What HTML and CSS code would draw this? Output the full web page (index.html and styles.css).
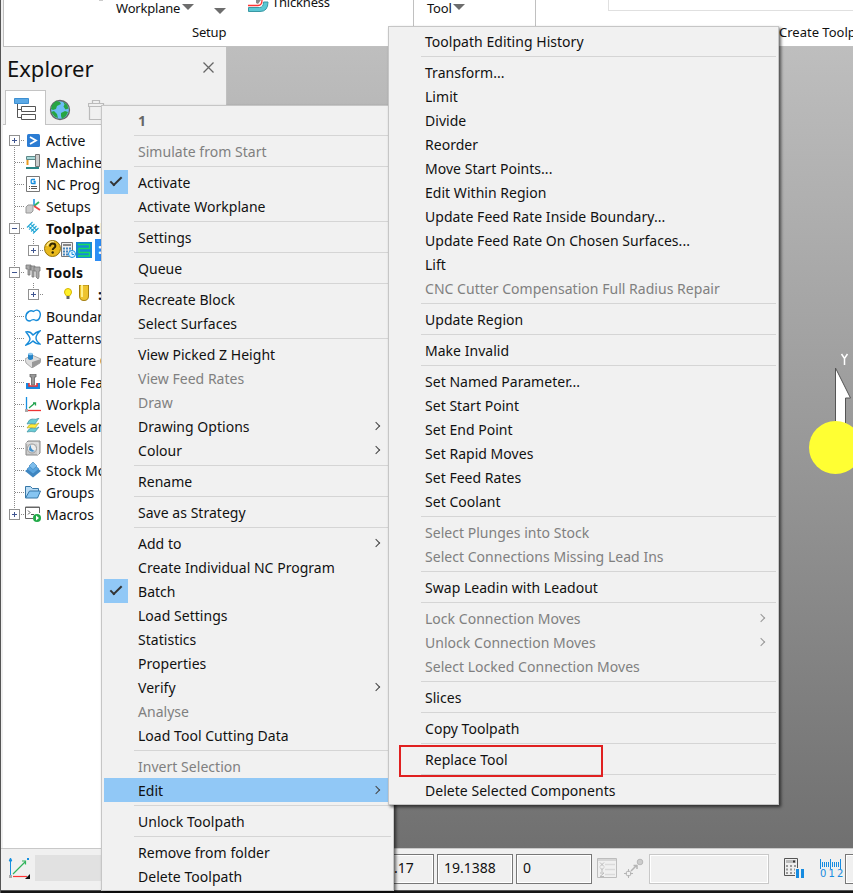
FILE: index.html
```html
<!DOCTYPE html>
<html lang="en">

<head>
    <meta charset="UTF-8">
    <meta name="viewport" content="width=device-width, initial-scale=1.0">
    <title>Explorer</title>
    <link rel="stylesheet" href="styles.css">
</head>

<body>
    <div class="app">
        <div class="ribbon">
            <div class="ribbon-group group-setup">
                <div class="ribbon-row">
                    <span class="smudge"></span>
                    <span class="workplane">Workplane</span><i class="caret"></i><i class="caret caret-low"></i>
                    <svg class="thickness-icon" width="21" height="13" viewBox="0 0 21 13"><path d="M.5 7.500h11q4 0 4-5.500h4.500q0 9.500-8 9.500H.5z" fill="#5bc8d4" stroke="#3a98a4"/><path d="M0 5.500h10q4 0 4-5.500" fill="none" stroke="#f33" stroke-width="1.300"/><path d="M8 0h5l-3 4-2-1z" fill="#888"/></svg>
                    <span class="thickness">Thickness</span>
                </div>
                <div class="ribbon-title">Setup</div>
            </div>
            <div class="ribbon-group group-tool">
                <div class="ribbon-row"><span class="tool">Tool</span><i class="caret"></i></div>
            </div>
            <div class="ribbon-group group-create">
                <div class="ribbon-input"></div>
                <div class="ribbon-title">Create Toolpaths</div>
            </div>
        </div>

        <div class="main">
            <div class="explorer">
                <div class="explorer-head">
                    <h1>Explorer</h1>
                    <svg width="11" height="11" viewBox="0 0 11 11"><path d="M.5.500l10 10M10.500.500l-10 10" stroke="#666" stroke-width="1.300"/></svg>
                </div>
                <div class="tabs">
                    <div class="tab active">
                        <svg width="22" height="23" viewBox="0 0 22 23"><path d="M3.500 6v13.500H7M3.500 11.500H7" fill="none" stroke="#555"/><path d="M.5.500h14v5H.5z" fill="#5ba9e6" stroke="#3d8fd1"/><path d="M7.500 8.500h14v5h-14zM7.500 16.500h14v5h-14z" fill="#fff" stroke="#555"/></svg>
                    </div>
                    <svg class="globe" width="22" height="22" viewBox="0 0 22 22"><circle cx="11" cy="11" r="9.500" fill="#6cbcf5" stroke="#666" stroke-width="1.300"/><path d="M3 6l4-4 4 1 1 2-4 2-1 3-3 1-2-1zM14 2.500l4 3 1.500 4-3 1-2-3 1-2zM2 13l3-1 3 3 1 4-3-1zM12 14l4-2 3 1-2 4-4 3-1-3z" fill="#27a543"/></svg>
                    <svg class="trash" width="18" height="21" viewBox="0 0 18 21"><path d="M.5 3.500h15v3H.5zM1.500 6.500v13h13v-13M4.500 3.500v-3h7v3" fill="none" stroke="#bbb" stroke-width="1.200"/></svg>
                </div>
                <ul class="tree">
                    <li><i class="expander plus"></i><i class="dots short"></i>
                        <svg class="icon" viewBox="0 0 16 16"><rect x="2" y="2" width="13" height="13" rx="1.500" fill="#2b7cd3"/><path d="M5 5l6 3.500L5 12" fill="none" stroke="#fff" stroke-width="1.800"/></svg>Active</li>
                    <li><i class="dots"></i>
                        <svg class="icon" viewBox="0 0 16 16"><path d="M1.500 2.500h9v3h-9z" fill="#a9dada" stroke="#5e8888"/><path d="M10.500.500h4v12h-4z" fill="#ccc" stroke="#777"/><path d="M2.500 6v5" stroke="#e89b20" stroke-width="2"/><path d="M1 14h13" stroke="#2b8585" stroke-width="2"/></svg>Machine Tools</li>
                    <li><i class="dots"></i>
                        <svg class="icon" viewBox="0 0 16 16"><path d="M1.500.500h13v15h-13z" fill="#fff" stroke="#777"/><path d="M10 3.500H7q-.8 0-.8 1v2q0 1 .8 1h3v-2H8.500" fill="none" stroke="#168fe0" stroke-width="1.300"/><path d="M4 10.500h1m1 0h6M4 12.500h1m1 0h6" stroke="#555"/></svg>NC Programs</li>
                    <li><i class="dots"></i>
                        <svg class="icon" viewBox="0 0 16 16"><path d="M9 8V1" stroke="#168fe0" stroke-width="1.500"/><path d="M9 8l5-4" stroke="#35b565" stroke-width="1.800"/><path d="M9 8l6 4" stroke="#e44" stroke-width="1.800"/><path d="M1 9l2-2h5v6l-2 2H1z" fill="#ccc" stroke="#999"/></svg>Setups</li>
                    <li class="bold"><i class="expander minus"></i><i class="dots short"></i>
                        <svg class="icon" viewBox="0 0 16 16"><path d="M2 7.500L7.500 2M4 9.500L9.500 4M6 11.500L11.500 6M8 13.500L13.500 8M3.500 6l6.500 6.500M5.500 4l6.500 6.500" stroke="#27a9d6" stroke-width="1.100"/></svg>Toolpaths</li>
                    <li class="child"><i class="expander plus"></i><i class="dots tiny"></i>
                        <svg class="question" width="17" height="17" viewBox="0 0 17 17"><circle cx="8.500" cy="8.500" r="8" fill="#e9b91c" stroke="#92720c"/><path d="M3 6q2-5 7-4" stroke="#ffe98b" fill="none" stroke-width="1.500"/><path d="M6 6.500q0-3 2.700-3t2.700 2.500c0 2-2.700 2-2.700 4" fill="none" stroke="#332800" stroke-width="1.900"/><circle cx="8.700" cy="12.500" r="1.200" fill="#332800"/></svg>
                        <svg width="15" height="16" viewBox="0 0 15 16"><path d="M.5.500h11v14H.5z" fill="#f0f0f0" stroke="#777"/><path d="M2 3h8" stroke="#888" stroke-width="2"/><path d="M2 6.500h8M2 9.500h8M2 12.500h8" stroke="#4685bd" stroke-width="2" stroke-dasharray="2 1"/><circle cx="11" cy="12" r="3.500" fill="#e7f6ff" stroke="#168fe0"/><path d="M11 10v2.500h2" fill="none" stroke="#168fe0"/></svg>
                        <svg width="16" height="16" viewBox="0 0 16 16"><path d="M0 0h16v16H0z" fill="#168bd5"/><path d="M2 2.500h11.500v4H3v4h10.500v3.500H2" fill="none" stroke="#19dc61" stroke-width="1.300"/></svg>
                        <b class="selected">:</b></li>
                    <li class="bold"><i class="expander minus"></i><i class="dots short"></i>
                        <svg class="icon" viewBox="0 0 16 16"><g fill="#aaa" stroke="#777" stroke-width=".8"><path d="M1 1h5v4H5v6H3V5H1zM5 2h5v4H9v7H7V6H5z"/><path d="M9 3h6v4h-1v6l-1 2-2-2V7H9z"/></g></svg>Tools</li>
                    <li class="child"><i class="expander plus"></i><i class="dots tiny"></i>
                        <svg class="bulb" width="10" height="14" viewBox="0 0 10 14"><path d="M1.500 5a3.500 3.500 0 017 0q0 2-2 4h-3q-2-2-2-4z" fill="#fff129" stroke="#d7b600"/><path d="M3.500 9h3v3h-3z" fill="#666"/></svg>
                        <svg class="endmill" width="10" height="16" viewBox="0 0 10 16"><path d="M.5 0v11q0 4.500 4.500 4.500T9.500 11V0z" fill="#eec42f" stroke="#a27e12"/><path d="M3 0v12" stroke="#fff08b" stroke-width="2"/></svg>
                        <b class="tool-name">:</b></li>
                    <li><i class="dots"></i>
                        <svg class="icon" viewBox="0 0 16 16"><path d="M4 3.500q2-1.500 4.500 0 3-2.500 5.500-.5 2 2 1 5.500-1 4-4 4-3-2-6 .5Q1 13 .8 9 1 5 4 3.500z" fill="none" stroke="#168bd9" stroke-width="1.400"/></svg>Boundaries</li>
                    <li><i class="dots"></i>
                        <svg class="icon" viewBox="0 0 16 16"><path d="M1 2q4-1 7 3 3-3 7-4-4 4-4 7t4 6q-4 0-7-3-3 3-7 4 4-4 4-6T1 2z" fill="none" stroke="#168bd9" stroke-width="1.400"/></svg>Patterns</li>
                    <li><i class="dots"></i>
                        <svg class="icon" viewBox="0 0 16 16"><path d="M0 7l7-4 9 4-1 4-8 5-6-5z" fill="#ddd" stroke="#999" stroke-width=".8"/><path d="M7 10l9-3-1 4-8 5z" fill="#999"/><path d="M3 2v5q2 2 5 0V2z" fill="#2684c7"/><ellipse cx="5.500" cy="2" rx="2.500" ry="1.300" fill="#8fc9ef"/></svg>Feature Groups</li>
                    <li><i class="dots"></i>
                        <svg class="icon" viewBox="0 0 16 16"><path d="M1 9h3v3h8V9h3v6H1z" fill="#1689e0"/><path d="M4 9v3h8V9" fill="none" stroke="#ed3030" stroke-width="1.500"/><path d="M5 0h6v3H9.500v8h-3V3H5z" fill="#999" stroke="#666" stroke-width=".8"/></svg>Hole Feature Sets</li>
                    <li><i class="dots"></i>
                        <svg class="icon" viewBox="0 0 16 16"><path d="M1.500 13V1" stroke="#168fe0" stroke-width="1.300"/><path d="M2 14.500h14" stroke="#ee3434" stroke-width="1.300"/><path d="M4 12l6-5M8 7h2.500v2.500" stroke="#24a450" stroke-width="1.300" fill="none"/><path d="M0 13h3v3H0z" fill="#aaa"/></svg>Workplanes</li>
                    <li><i class="dots"></i>
                        <svg class="icon" viewBox="0 0 16 16"><path d="M2 14q2-4 5-4 4 1 7-1l-4 5q-4-1-8 0z" fill="#69cbd5" stroke="#368a98" stroke-width=".6"/><path d="M2 10q2-4 5-4 4 1 7-1l-4 5q-4-1-8 0z" fill="#ffed39" stroke="#aa9d23" stroke-width=".6"/><path d="M2 6q2-5 5-5 4 1 7-1l-4 6q-4-1-8 0z" fill="#69cbd5" stroke="#368a98" stroke-width=".6"/></svg>Levels and Sets</li>
                    <li><i class="dots"></i>
                        <svg class="icon" viewBox="0 0 16 16"><path d="M1 3l2-2h12v12l-2 2H1z" fill="#ccc" stroke="#888"/><path d="M13 3v12M13 3H1" fill="none" stroke="#eee"/><circle cx="7" cy="8.500" r="4.500" fill="#eee" stroke="#999"/><path d="M6 5q-1 4 4 6-4 2-6-1 0-4 2-5z" fill="#438fc8"/></svg>Models</li>
                    <li><i class="dots"></i>
                        <svg class="icon" viewBox="0 0 16 16"><path d="M8 3l8 6-8 6.500L0 9z" fill="#3f86c1"/><path d="M8 1.500L14 7l-6 5-6-5z" fill="#5ba5df" stroke="#397fb9" stroke-width=".6"/><path d="M8 0l4 4-4 3.500L4 4z" fill="#7dbdec" stroke="#397fb9" stroke-width=".6"/></svg>Stock Models</li>
                    <li><i class="dots"></i>
                        <svg class="icon" viewBox="0 0 16 16"><path d="M.5 14V2.500h5l2 2h6v3" fill="#b9dcf5" stroke="#3677a7"/><path d="M.5 14l4-7h11l-3 7z" fill="#86c5f2" stroke="#3677a7"/></svg>Groups</li>
                    <li><i class="expander plus"></i><i class="dots short"></i>
                        <svg class="icon" viewBox="0 0 16 16"><path d="M8 12.500H.5V1h14v6" fill="#fff" stroke="#666"/><path d="M0 1.500h15" stroke="#666"/><path d="M3 4.500l2 2-2 2M6 8.500h3" fill="none" stroke="#555"/><circle cx="12" cy="12" r="4" fill="#22aa48"/><path d="M11 9.500l3 2.500-3 2.500z" fill="#fff"/></svg>Macros</li>
                </ul>
            </div>
            <div class="canvas">
                <svg class="axis" width="46" height="130" viewBox="0 0 46 130">
                    <path d="M28.500 89V24l15 30h-5v35z" fill="#fff" stroke="#555"/>
                    <path d="M34.500 10l3 4.500 3-4.500M37.500 14v7" fill="none" stroke="#fff" stroke-width="1.500"/>
                    <circle cx="28.500" cy="103.500" r="26.500" fill="#ffff33"/>
                </svg>
            </div>
        </div>

        <div class="statusbar">
            <svg class="axes-icon" width="22" height="22" viewBox="0 0 22 22"><path d="M2.500 18V2M1.200 4l1.300-3 1.300 3z" stroke="#168fe0" fill="#168fe0"/><path d="M5 17L17 5M14 4h3.500v3.500" fill="none" stroke="#31b45b" stroke-width="1.200"/><path d="M5 19.500h14" stroke="#f33" stroke-width="1.200"/><path d="M1 18h3v3H1z" fill="#aaa"/><path d="M19 1h2v2h-2z" fill="#168fe0"/><path d="M22 17v5h-5z" fill="#111"/></svg>
            <div class="status-message"></div>
            <div class="field coord-x">126.17</div>
            <div class="field">19.1388</div>
            <div class="field">0</div>
            <svg class="xyz-icon" width="20" height="20" viewBox="0 0 20 20"><path d="M.5.500h19v19H.5zM0 2h20" fill="none" stroke="#bdbdbd"/><path d="M8 6.500h10M8 11.500h10M8 16.500h10" stroke="#dadada" stroke-width="1.500"/><path d="M3 4.500l4 4M7 4.500l-4 4M3 9.500l2 2 2-2M5 11v3M3 15h4l-4 3.500h4" fill="none" stroke="#bbb"/></svg>
            <svg class="link-icon" width="20" height="20" viewBox="0 0 20 20"><circle cx="16" cy="4" r="2.800" fill="#ccc" stroke="#b8b8b8"/><path d="M7 13l6-6M9.500 7.500H13V11" fill="none" stroke="#b5b5b5" stroke-width="1.500"/><circle cx="4.500" cy="15.500" r="2.500" fill="none" stroke="#b5b5b5"/><path d="M4.500 11v3M4.500 17v3M0 15.500h3M6 15.500h3" stroke="#b5b5b5"/></svg>
            <div class="field light"></div>
            <svg class="calc-icon" width="20" height="20" viewBox="0 0 20 20"><path d="M.5.500h13v17H.5z" fill="#eee" stroke="#555"/><path d="M2 2h10v3H2z" fill="#bbb"/><path d="M9 2.500h2v2H9z" fill="#333"/><path d="M2 8h10M2 11.500h10M2 15h10" stroke="#999" stroke-width="2" stroke-dasharray="2 2"/><path d="M11 10h9v10h-9z" fill="#f0f0f0"/><path d="M12 11h3v9h-3zM17 11h3v9h-3z" fill="#168be0"/></svg>
            <div class="ruler">
                <svg width="22" height="10" viewBox="0 0 22 10"><path d="M.5 0v10M10.500 0v10M20.500 0v10M2.500 3v5M4.500 3v5M6.500 3v5M8.500 3v5M12.500 3v5M14.500 3v5M16.500 3v5M18.500 3v5" stroke="#168be0"/></svg>
                <span>012</span>
            </div>
            <div class="field last"></div>
        </div>
        <div class="bottom-edge"></div>
    </div>

    <!-- Toolpath context menu -->
    <div class="menu context-menu">
        <div class="item title">1</div>
        <hr>
        <div class="item disabled">Simulate from Start</div>
        <hr>
        <div class="item checked">Activate</div>
        <div class="item">Activate Workplane</div>
        <hr>
        <div class="item">Settings</div>
        <hr>
        <div class="item">Queue</div>
        <hr>
        <div class="item">Recreate Block</div>
        <div class="item">Select Surfaces</div>
        <hr>
        <div class="item">View Picked Z Height</div>
        <div class="item disabled">View Feed Rates</div>
        <div class="item disabled">Draw</div>
        <div class="item more">Drawing Options</div>
        <div class="item more">Colour</div>
        <hr>
        <div class="item">Rename</div>
        <hr>
        <div class="item">Save as Strategy</div>
        <hr>
        <div class="item more">Add to</div>
        <div class="item">Create Individual NC Program</div>
        <div class="item checked">Batch</div>
        <div class="item">Load Settings</div>
        <div class="item">Statistics</div>
        <div class="item">Properties</div>
        <div class="item more">Verify</div>
        <div class="item disabled">Analyse</div>
        <div class="item">Load Tool Cutting Data</div>
        <hr>
        <div class="item disabled">Invert Selection</div>
        <div class="item more highlight">Edit</div>
        <hr>
        <div class="item">Unlock Toolpath</div>
        <hr>
        <div class="item">Remove from folder</div>
        <div class="item">Delete Toolpath</div>
    </div>

    <!-- Edit submenu -->
    <div class="menu edit-menu">
        <div class="item">Toolpath Editing History</div>
        <hr>
        <div class="item">Transform...</div>
        <div class="item">Limit</div>
        <div class="item">Divide</div>
        <div class="item">Reorder</div>
        <div class="item">Move Start Points...</div>
        <div class="item">Edit Within Region</div>
        <div class="item">Update Feed Rate Inside Boundary...</div>
        <div class="item">Update Feed Rate On Chosen Surfaces...</div>
        <div class="item">Lift</div>
        <div class="item disabled">CNC Cutter Compensation Full Radius Repair</div>
        <hr>
        <div class="item">Update Region</div>
        <hr>
        <div class="item">Make Invalid</div>
        <hr>
        <div class="item">Set Named Parameter...</div>
        <div class="item">Set Start Point</div>
        <div class="item">Set End Point</div>
        <div class="item">Set Rapid Moves</div>
        <div class="item">Set Feed Rates</div>
        <div class="item">Set Coolant</div>
        <hr>
        <div class="item disabled">Select Plunges into Stock</div>
        <div class="item disabled">Select Connections Missing Lead Ins</div>
        <hr>
        <div class="item">Swap Leadin with Leadout</div>
        <hr>
        <div class="item disabled more">Lock Connection Moves</div>
        <div class="item disabled more">Unlock Connection Moves</div>
        <div class="item disabled">Select Locked Connection Moves</div>
        <hr>
        <div class="item">Slices</div>
        <hr>
        <div class="item">Copy Toolpath</div>
        <hr>
        <div class="item">Replace Tool</div>
        <hr>
        <div class="item">Delete Selected Components</div>
    </div>
    <div class="callout"></div>
</body>

</html>
```

FILE: styles.css
```css
*,
*::before,
*::after {
    box-sizing: border-box;
}

body {
    margin: 0;
    width: 853px;
    height: 893px;
    overflow: hidden;
    position: relative;
    font-family: "Noto Sans", "Open Sans", sans-serif;
    font-size: 14px;
    color: #111;
    background: #f0f0f0;
}

.app {
    display: flex;
    flex-direction: column;
    height: 893px;
    border-left: 1px solid #555;
    overflow: hidden;
}

.app svg {
    flex: none;
}

/* ribbon */
.ribbon {
    display: flex;
    height: 47px;
    padding-left: 2px;
    font-size: 13px;
    letter-spacing: -0.2px;
}

.ribbon-group {
    flex: none;
    height: 47px;
    background: #fff;
    border-left: 1px solid #c0c0c0;
    border-bottom: 1px solid #c0c0c0;
    overflow: hidden;
}

.group-setup {
    width: 410px;
}

.group-tool {
    width: 122px;
}

.group-create {
    width: 320px;
}

.ribbon-row {
    display: flex;
    height: 22px;
    line-height: 17px;
    align-items: flex-start;
}

.smudge {
    width: 4px;
    height: 1px;
    margin-left: 95px;
    background: #ccc;
}

.workplane {
    width: 66px;
    margin-left: 13px;
}

.tool {
    width: 26px;
    margin-left: 13px;
}

.caret {
    border: 6px solid transparent;
    border-top: 6px solid #6d6d6d;
    border-bottom: 0;
    margin-top: 4px;
}

.caret-low {
    margin: 8px 0 0 20px;
}

.thickness-icon {
    margin-left: 22px;
}

.thickness {
    margin: -6px 0 0 3px;
}

.ribbon-title {
    line-height: 20px;
}

.group-setup .ribbon-title {
    padding-left: 188px;
}

.ribbon-input {
    height: 11px;
    margin: 0 0 11px 72px;
    border: solid #e0e0e0;
    border-width: 0 0 1px 1px;
}

.group-create .ribbon-title {
    padding-left: 243px;
    white-space: nowrap;
    letter-spacing: 0;
}

/* explorer panel */
.main {
    display: flex;
    height: 801px;
}

.explorer {
    display: flex;
    flex-direction: column;
    width: 226px;
    padding-left: 2px;
    border-right: 1px solid #c0c0c0;
    background: #f0f0f0;
}

.explorer-head {
    display: flex;
    justify-content: space-between;
    align-items: center;
    height: 43px;
    padding: 0 12px 2px 4px;
}

.explorer-head h1 {
    margin: 0;
    font-size: 22px;
    font-weight: normal;
}

.tabs {
    display: flex;
    height: 35px;
    border-bottom: 1px solid #c4c4c4;
}

.tab {
    width: 41px;
    height: 35px;
    margin-left: 2px;
    padding: 7px 0 0 8px;
    border: 1px solid #c4c4c4;
    border-bottom: 0;
    background: #fff;
}

.globe {
    margin: 9px 0 0 3px;
}

.trash {
    margin: 10px 0 0 17px;
}

.tree {
    flex: 1;
    margin: 0;
    padding: 4px 0 0 6px;
    list-style: none;
    background: repeating-linear-gradient(#888 0 1px, #fff 1px 2px) 11px 16px / 1px 374px no-repeat #fff;
}

.tree li {
    display: flex;
    align-items: center;
    height: 22px;
    white-space: nowrap;
    overflow: hidden;
}

.tree .bold {
    font-weight: bold;
    letter-spacing: 0.3px;
}

.icon {
    width: 16px;
    height: 16px;
    margin-right: 5px;
}

.expander {
    flex: none;
    width: 11px;
    height: 11px;
    border: 1px solid #919191;
    background: linear-gradient(#3f5590, #3f5590) 2px 4px / 5px 1px no-repeat #fff;
}

.plus {
    background: linear-gradient(#3f5590, #3f5590) 2px 4px / 5px 1px no-repeat,
        linear-gradient(#3f5590, #3f5590) 4px 2px / 1px 5px no-repeat #fff;
}

.dots {
    flex: none;
    width: 10px;
    height: 1px;
    margin-left: 6px;
    background: repeating-linear-gradient(90deg, #888 0 1px, #fff 1px 2px);
}

.dots.short {
    width: 4px;
    margin: 0 0 0 1px;
}

.dots.tiny {
    width: 4px;
    margin: 0 0 0 1px;
}

.tree .child {
    padding-left: 19px;
    background: repeating-linear-gradient(#888 0 1px, #fff 1px 2px) 24px 0 / 1px 6px no-repeat;
}

.question {
    margin: -4px 0 0 0;
}

.selected {
    width: 8px;
    height: 22px;
    margin-left: 3px;
    padding-left: 3px;
    color: #fff;
    background: #2d8df5;
}

.bulb {
    margin-left: 19px;
}

.endmill {
    margin: -2px 0 0 6px;
}

.tool-name {
    margin-left: 9px;
}

/* 3D view */
.canvas {
    flex: 1;
    display: flex;
    justify-content: flex-end;
    padding-top: 297px;
    background: linear-gradient(#bebebe, #989898 50%, #707070);
}

/* status bar */
.statusbar {
    display: flex;
    align-items: flex-start;
    height: 42px;
    padding: 5px 0 0 7px;
    border-top: 1px solid #c8c8c8;
    background: #f0f0f0;
    overflow: hidden;
}

.axes-icon {
    margin-top: 3px;
}

.status-message {
    flex: none;
    width: 315px;
    height: 26px;
    margin: 1px 8px 0 5px;
    background: #e1e1e1;
}

.field {
    flex: none;
    width: 76px;
    height: 30px;
    margin-right: 3px;
    padding-left: 6px;
    line-height: 25px;
    border: 1px solid #777;
    box-shadow: inset 0 0 0 1px #fff;
}

.coord-x {
    padding-left: 11px;
}

.light {
    width: 120px;
    margin: 0 15px 0 5px;
    border-color: #c8c8c8;
}

.last {
    margin: 0 0 0 3px;
}

.xyz-icon {
    margin: 4px 0 0 2px;
}

.link-icon {
    margin: 4px 0 0 7px;
}

.calc-icon {
    margin-top: 4px;
}

.ruler {
    flex: none;
    width: 22px;
    margin: 5px 0 0 16px;
    color: #168be0;
}

.ruler svg {
    display: block;
}

.ruler span {
    display: block;
    font: 10px/10px "DejaVu Sans", sans-serif;
    letter-spacing: 2.2px;
}

.bottom-edge {
    height: 3px;
    background: #151515;
    border-top: 1px solid #555;
}

/* menus */
.menu {
    position: absolute;
    padding: 2px;
    border: 1px solid #c6c6c6;
    background: #f1f1f1;
    box-shadow: 2px 2px 3px rgba(0, 0, 0, 0.6);
    letter-spacing: 0.03px;
}

.context-menu {
    left: 101px;
    top: 105px;
    width: 293px;
}

.edit-menu {
    left: 388px;
    top: 26px;
    width: 391px;
}

.item {
    display: flex;
    align-items: center;
    height: 24px;
    padding-left: 34px;
    white-space: nowrap;
}

.menu hr {
    height: 1px;
    margin: 3px 0 3px 30px;
    border: 0;
    background: #d5d5d5;
}

.title {
    font-weight: bold;
    color: #666;
}

.disabled {
    color: #808080;
}

.highlight {
    background: #91c8f6;
}

.checked {
    background: linear-gradient(#91c8f6, #91c8f6) 0 0 / 24px 24px no-repeat;
}

.checked::before {
    content: "";
    width: 12px;
    height: 6px;
    margin: -4px 16px 0 -28px;
    border: solid #333;
    border-width: 0 0 2px 2px;
    transform: rotate(-45deg);
}

.more::after {
    content: "";
    width: 6px;
    height: 6px;
    margin: 0 12px 0 auto;
    border: solid #444;
    border-width: 1px 1px 0 0;
    transform: rotate(45deg);
}

.disabled.more::after {
    border-color: #999;
}

/* outline around Replace Tool */
.callout {
    position: absolute;
    left: 399px;
    top: 745px;
    width: 204px;
    height: 32px;
    border: 2px solid #e02020;
}
```
